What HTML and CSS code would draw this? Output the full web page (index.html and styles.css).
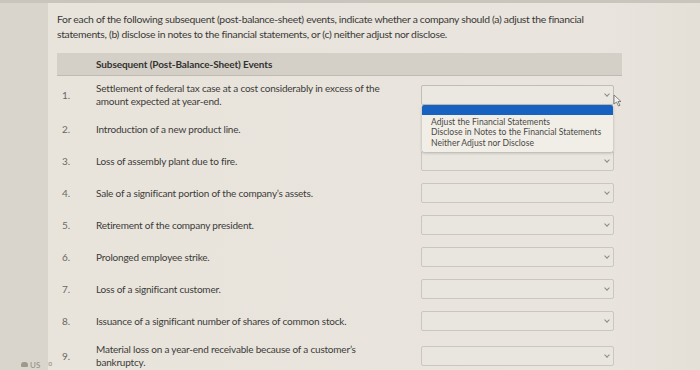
FILE: index.html
```html
<!DOCTYPE html>
<html lang="en">

<head>
    <meta charset="UTF-8">
    <meta name="viewport" content="width=device-width, initial-scale=1.0">
    <title>Subsequent Events</title>
    <link rel="stylesheet" href="styles.css">
</head>

<body>
    <div class="screen">
        <aside class="side"></aside>

        <main class="panel">
            <p class="intro">For each of the following subsequent (post-balance-sheet) events, indicate whether a company should (a) adjust the financial statements, (b) disclose in notes to the financial statements, or (c) neither adjust nor disclose.</p>

            <div class="events">
                <div class="head">
                    <span></span>
                    <span class="head-title">Subsequent (Post-Balance-Sheet) Events</span>
                    <span></span>
                </div>

                <div class="row">
                    <span class="num">1.</span>
                    <span class="desc">Settlement of federal tax case at a cost considerably in excess of the amount expected at year-end.</span>
                    <div class="pick open">
                        <div class="select"><span class="chev"></span></div>
                        <svg class="cursor" width="9" height="13" viewBox="0 0 9 13">
                            <path d="M1 1 L1 10 L3.5 8 L5.5 12 L7 11.3 L5 7.5 L8 7.5 Z" fill="#f4f2ee" stroke="#6b6b6b" stroke-width="0.8" />
                        </svg>
                        <ul class="menu">
                            <li class="sel"></li>
                            <li>Adjust the Financial Statements</li>
                            <li>Disclose in Notes to the Financial Statements</li>
                            <li>Neither Adjust nor Disclose</li>
                        </ul>
                    </div>
                </div>

                <div class="row">
                    <span class="num">2.</span>
                    <span class="desc">Introduction of a new product line.</span>
                    <div class="pick"></div>
                </div>

                <div class="row">
                    <span class="num">3.</span>
                    <span class="desc">Loss of assembly plant due to fire.</span>
                    <div class="pick"><div class="select"><span class="chev"></span></div></div>
                </div>

                <div class="row">
                    <span class="num">4.</span>
                    <span class="desc">Sale of a significant portion of the company’s assets.</span>
                    <div class="pick"><div class="select"><span class="chev"></span></div></div>
                </div>

                <div class="row">
                    <span class="num">5.</span>
                    <span class="desc">Retirement of the company president.</span>
                    <div class="pick"><div class="select"><span class="chev"></span></div></div>
                </div>

                <div class="row">
                    <span class="num">6.</span>
                    <span class="desc">Prolonged employee strike.</span>
                    <div class="pick"><div class="select"><span class="chev"></span></div></div>
                </div>

                <div class="row">
                    <span class="num">7.</span>
                    <span class="desc">Loss of a significant customer.</span>
                    <div class="pick"><div class="select"><span class="chev"></span></div></div>
                </div>

                <div class="row">
                    <span class="num">8.</span>
                    <span class="desc">Issuance of a significant number of shares of common stock.</span>
                    <div class="pick"><div class="select"><span class="chev"></span></div></div>
                </div>

                <div class="row">
                    <span class="num">9.</span>
                    <span class="desc">Material loss on a year-end receivable because of a customer’s bankruptcy.</span>
                    <div class="pick"><div class="select"><span class="chev"></span></div></div>
                </div>
            </div>
        </main>

        <!-- taskbar bits showing through at the bottom left -->
        <div class="tray">
            <span class="globe"></span>US
            <span class="dot">o</span>
        </div>
    </div>
</body>

</html>
```

FILE: styles.css
```css
body {
    margin: 0;
    font-family: Lato, "Open Sans", sans-serif;
    background-color: #e7e3db;
    color: #3c3b38;
    overflow: hidden;
}

.screen {
    display: flex;
    height: 370px;
    border-top: 3px solid #c9c5bc;
    box-sizing: border-box;
    position: relative;
}

.side {
    width: 48px;
    flex-shrink: 0;
    background-color: #d9d5cc;
}

.panel {
    flex: 1;
    padding: 9px 0 0 9px;
    background: linear-gradient(to right, #e8e4dc 0%, #e9e5de 85%, #e4e0d8 100%);
}

.intro {
    margin: 0;
    width: 560px;
    font-size: 10.4px;
    letter-spacing: -0.3px;
    line-height: 15px;
    color: #3a3936;
}

.events {
    margin-top: 11px;
    width: 565px;
}

.head,
.row {
    display: grid;
    grid-template-columns: 39px 1fr 193px;
    padding-right: 8px;
}

.head {
    height: 22px;
    align-items: center;
    background-color: #d4d0c8;
    border-bottom: 1px solid #bfbbb2;
}

.head-title {
    font-weight: bold;
    font-size: 10px;
    letter-spacing: -0.1px;
    color: #33322f;
}

.row {
    align-items: center;
    padding-top: 6px;
    padding-bottom: 6px;
    min-height: 20px;
}

.num {
    padding-left: 5px;
    font-size: 10px;
    color: #6a6862;
}

.desc {
    font-size: 10px;
    letter-spacing: -0.2px;
    line-height: 12.5px;
    max-width: 296px;
    color: #3c3b38;
}

.pick {
    position: relative;
    height: 20px;
}

.select {
    height: 20px;
    box-sizing: border-box;
    border: 1px solid #cbc7be;
    border-radius: 2px;
    background-color: #e9e6df;
    position: relative;
}

.open .select {
    border-color: #c1bdb4;
    background-color: #ebe8e1;
}

.chev {
    position: absolute;
    right: 4px;
    top: 6px;
    width: 3px;
    height: 3px;
    border-right: 1.3px solid #8d8a83;
    border-bottom: 1.3px solid #8d8a83;
    transform: rotate(45deg);
}

.cursor {
    position: absolute;
    right: -8px;
    top: 9px;
}

.menu {
    position: absolute;
    top: 20px;
    left: 1px;
    width: 191px;
    margin: 0;
    padding: 0 0 4px 0;
    list-style: none;
    background-color: #f1eee8;
    border-radius: 2px;
    box-shadow: 0 1px 3px rgba(0, 0, 0, 0.25);
    z-index: 2;
}

.menu li {
    font-size: 8.6px;
    line-height: 10.5px;
    padding-left: 9px;
    color: #4a4944;
    white-space: nowrap;
}

.menu .sel {
    height: 10px;
    background-color: #1762c0;
    border-radius: 2px 2px 0 0;
    margin-bottom: 2px;
}

.tray {
    position: absolute;
    left: 21px;
    bottom: 0;
    font-size: 8px;
    color: #8d8a82;
    display: flex;
    align-items: center;
}

.globe {
    width: 7px;
    height: 5px;
    border-radius: 3px 3px 1px 1px;
    background-color: #9c998f;
    margin-right: 2px;
}

.dot {
    margin-left: 8px;
    margin-bottom: 3px;
    font-size: 7px;
}
```
